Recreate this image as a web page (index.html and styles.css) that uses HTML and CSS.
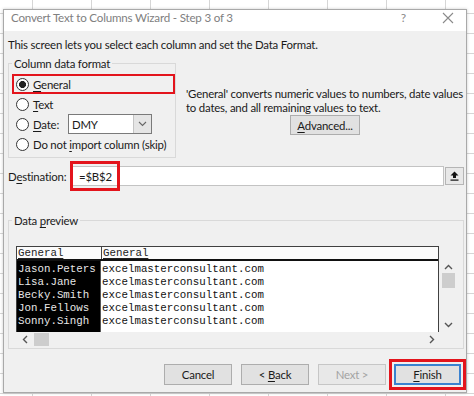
FILE: index.html
```html
<!DOCTYPE html>
<html lang="en">
<head>
  <meta charset="UTF-8">
  <title>Convert Text to Columns Wizard</title>
  <link rel="stylesheet" href="styles.css">
</head>
<body>
  <!-- Wizard window -->
  <div class="dialog">
    <div class="titlebar">
      <span class="title">Convert Text to Columns Wizard - Step 3 of 3</span>
      <span class="help">?</span>
      <svg class="close" width="12" height="12" viewBox="0 0 12 12">
        <path d="M1 1 L11 11 M11 1 L1 11" stroke="#8a8a8a" stroke-width="1.1" fill="none"/>
      </svg>
    </div>

    <div class="content">
      <p class="intro">This screen lets you select each column and set the Data Format.</p>

      <!-- Column data format -->
      <div class="format-row">
        <fieldset class="group format-group">
          <legend>Column data format</legend>
          <div class="radio-row marked">
            <span class="radio checked"></span><span><u>G</u>eneral</span>
          </div>
          <div class="radio-row">
            <span class="radio"></span><span><u>T</u>ext</span>
          </div>
          <div class="radio-row">
            <span class="radio"></span><span class="date-label"><u>D</u>ate:</span>
            <div class="select">
              <span class="select-value">DMY</span>
              <span class="select-arrow">
                <svg width="9" height="6" viewBox="0 0 9 6"><path d="M1 1 L4.5 4.5 L8 1" stroke="#666" stroke-width="1.1" fill="none"/></svg>
              </span>
            </div>
          </div>
          <div class="radio-row">
            <span class="radio"></span><span>Do not <u>i</u>mport column (skip)</span>
          </div>
        </fieldset>

        <div class="format-info">
          <p>'General' converts numeric values to numbers, date values<br>to dates, and all remaining values to text.</p>
          <button class="btn advanced-btn"><u>A</u>dvanced...</button>
        </div>
      </div>

      <!-- Destination -->
      <div class="dest-row">
        <span class="dest-label">D<u>e</u>stination:</span>
        <div class="dest-input">
          <span class="dest-value">=$B$2</span>
        </div>
        <button class="collapse-btn">
          <svg width="9" height="10" viewBox="0 0 9 10">
            <path d="M4.5 0.5 L8.5 4.5 L6 4.5 L6 7 L3 7 L3 4.5 L0.5 4.5 Z" fill="#111"/>
            <rect x="0.5" y="8.5" width="8" height="1.2" fill="#111"/>
          </svg>
        </button>
      </div>

      <!-- Data preview -->
      <fieldset class="group preview-group">
        <legend>Data <u>p</u>review</legend>
        <div class="preview">
          <div class="table">
            <div class="table-head">
              <span class="head-cell first"><u>General</u></span>
              <span class="head-cell"><u>General</u></span>
            </div>
            <div class="table-body">
              <div class="col first">
                <span>Jason.Peters</span>
                <span>Lisa.Jane</span>
                <span>Becky.Smith</span>
                <span>Jon.Fellows</span>
                <span>Sonny.Singh</span>
              </div>
              <div class="col">
                <span>excelmasterconsultant.com</span>
                <span>excelmasterconsultant.com</span>
                <span>excelmasterconsultant.com</span>
                <span>excelmasterconsultant.com</span>
                <span>excelmasterconsultant.com</span>
              </div>
            </div>
          </div>

          <div class="vscroll">
            <svg width="9" height="6" viewBox="0 0 9 6"><path d="M1 5 L4.5 1.5 L8 5" stroke="#555" stroke-width="1.4" fill="none"/></svg>
            <span class="vthumb"></span>
            <svg class="down" width="9" height="6" viewBox="0 0 9 6"><path d="M1 1 L4.5 4.5 L8 1" stroke="#555" stroke-width="1.4" fill="none"/></svg>
          </div>

          <div class="hscroll">
            <svg width="6" height="9" viewBox="0 0 6 9"><path d="M5 1 L1.5 4.5 L5 8" stroke="#555" stroke-width="1.4" fill="none"/></svg>
            <span class="hthumb"></span>
            <svg class="right" width="6" height="9" viewBox="0 0 6 9"><path d="M1 1 L4.5 4.5 L1 8" stroke="#555" stroke-width="1.4" fill="none"/></svg>
          </div>
        </div>
      </fieldset>

      <!-- Wizard buttons -->
      <div class="buttons">
        <button class="btn">Cancel</button>
        <button class="btn">&lt; <u>B</u>ack</button>
        <button class="btn" disabled>Next &gt;</button>
        <div class="finish-mark">
          <button class="btn finish-btn"><u>F</u>inish</button>
        </div>
      </div>
    </div>
  </div>
</body>
</html>
```

FILE: styles.css
```css
/* Page: spreadsheet grid behind the dialog */
body {
  margin: 0;
  width: 474px;
  height: 396px;
  overflow: hidden;
  font-family: Lato, "Noto Sans", sans-serif;
  font-size: 11.4px;
  letter-spacing: -0.2px;
  color: #1a1a1a;
  background-color: #fff;
  background-image:
    linear-gradient(to right, #d6d6d6 1px, transparent 1px),
    linear-gradient(to bottom, #d6d6d6 1px, transparent 1px);
  background-size: 59px 20px;
  background-position: 150px 0, 0 13px;
}

u {
  text-decoration-thickness: 1px;
  text-underline-offset: 2px;
}

/* Dialog window */
.dialog {
  margin: 9px 0 0 3px;
  width: 462px;
  height: 382px;
  border: 1px solid #a9a9a9;
  box-shadow: 0 0 3px rgba(0, 0, 0, 0.2);
  background: #f0f0f0;
  display: flex;
  flex-direction: column;
}

.titlebar {
  height: 21px;
  background: #fff;
  display: flex;
  align-items: flex-start;
  padding: 1px 0 0 7px;
  box-sizing: border-box;
  line-height: 14px;
}

.title {
  color: #808080;
  font-size: 11.6px;
}

.help {
  margin-left: auto;
  color: #8a8a8a;
  font-size: 12px;
}

.close {
  margin: 1px 12px 0 36px;
}

.content {
  flex: 1;
  padding: 6px 2px 0 4px;
  display: flex;
  flex-direction: column;
}

.intro {
  margin: 0 0 4px;
  line-height: 15px;
}

/* Group boxes */
.group {
  margin: 0;
  border: 1px solid #d9d9d9;
  min-width: 0;
}

.group legend {
  padding: 0 2px;
  line-height: 15px;
}

.format-row {
  display: flex;
  gap: 10px;
}

.format-group {
  width: 168px;
  flex-shrink: 0;
  box-sizing: border-box;
  padding: 3px 0 3px 3px;
}

.radio-row {
  height: 20px;
  box-sizing: border-box;
  border: 2px solid transparent;
  padding-left: 2px;
  display: flex;
  align-items: center;
  gap: 4px;
  white-space: nowrap;
}

.radio-row.marked {
  border-color: #e3141c;
}

.radio {
  width: 13px;
  height: 13px;
  box-sizing: border-box;
  border: 1px solid #333;
  border-radius: 50%;
  background: #fff;
  flex-shrink: 0;
}

.radio.checked {
  background: radial-gradient(circle, #222 3.2px, #fff 3.8px);
}

.date-label {
  width: 31px;
}

.select {
  width: 84px;
  height: 20px;
  box-sizing: border-box;
  border: 1px solid #7a7a7a;
  background: #fff;
  display: flex;
  align-items: center;
}

.select-value {
  flex: 1;
  padding-left: 3px;
}

.select-arrow {
  width: 17px;
  height: 18px;
  background: #e5e5e5;
  border-left: 1px solid #c4c4c4;
  display: flex;
  align-items: center;
  justify-content: center;
}

.format-info {
  flex: 1;
  margin-top: 31px;
  display: flex;
  flex-direction: column;
  align-items: center;
}

.format-info p {
  margin: 0;
  line-height: 14px;
  align-self: stretch;
  white-space: nowrap;
}

/* Buttons */
.btn {
  font-family: inherit;
  font-size: 11.4px;
  letter-spacing: -0.2px;
  color: #1a1a1a;
  background: #e1e1e1;
  border: 1px solid #adadad;
  padding: 0;
  height: 21px;
  width: 68px;
}

.btn:disabled {
  color: #a3a3a3;
  background: #e8e8e8;
  border-color: #c6c6c6;
}

.advanced-btn {
  width: 70px;
  height: 20px;
}

/* Destination */
.dest-row {
  margin-top: 8px;
  height: 20px;
  display: flex;
  align-items: center;
}

.dest-label {
  width: 62px;
}

.dest-input {
  flex: 1;
  height: 20px;
  box-sizing: border-box;
  border: 1px solid #c3c3c3;
  background: #fff;
  display: flex;
  align-items: center;
}

.dest-value {
  width: 50px;
  height: 30px;
  margin: -5px 0 -5px -1px;
  box-sizing: border-box;
  border: 3px solid #e3141c;
  padding: 0 6px;
  display: flex;
  align-items: center;
}

.collapse-btn {
  width: 19px;
  height: 18px;
  margin-left: 1px;
  padding: 0;
  background: #e8e8e8;
  border: 1px solid #b5b5b5;
  display: flex;
  align-items: center;
  justify-content: center;
}

/* Data preview */
.preview-group {
  margin-top: 27px;
  padding: 18px 6px 2px 7px;
}

.preview-group legend {
  margin-left: -4px;
}

.preview {
  display: grid;
  grid-template-columns: 423px 17px;
  grid-template-rows: 86px 14px;
  font-family: "Liberation Mono", "Courier New", monospace;
  font-size: 10.8px;
  letter-spacing: 0;
}

.table {
  border: 1px solid #404040;
  border-bottom: none;
  display: flex;
  flex-direction: column;
}

.table-head {
  height: 12px;
  display: flex;
  background: #fbfbfb;
  border-bottom: 2px solid #111;
  line-height: 12px;
}

.head-cell {
  flex: 1;
  padding-left: 1px;
  color: #222;
}

.head-cell.first {
  flex: 0 0 83px;
  border-right: 1px solid #444;
}

.table-body {
  flex: 1;
  display: flex;
}

.col {
  flex: 1;
  display: flex;
  flex-direction: column;
  padding: 2px 0 0 1px;
  background: #fff;
  color: #111;
  line-height: 13px;
}

.col.first {
  flex: 0 0 82px;
  background: #000;
  color: #e6e6e6;
  border-right: 1px solid #555;
}

.vscroll {
  padding: 18px 0 4px 2px;
  display: flex;
  flex-direction: column;
  align-items: center;
}

.vthumb {
  width: 13px;
  height: 15px;
  background: #cdcdcd;
  margin-top: 3px;
}

.vscroll .down {
  margin-top: auto;
}

.hscroll {
  display: flex;
  align-items: center;
  padding: 0 4px 0 6px;
  gap: 6px;
}

.hthumb {
  width: 15px;
  height: 13px;
  background: #cdcdcd;
}

.hscroll .right {
  margin-left: auto;
}

/* Bottom button row */
.buttons {
  margin-top: 10px;
  display: flex;
  justify-content: flex-end;
  align-items: center;
  gap: 9px;
}

.finish-mark {
  margin: 0 -2px 0 -6px;
  border: 3px solid #e3141c;
  padding: 2px;
  display: flex;
}

.finish-btn {
  width: 67px;
  border: 2px solid #3a82d0;
}
```
